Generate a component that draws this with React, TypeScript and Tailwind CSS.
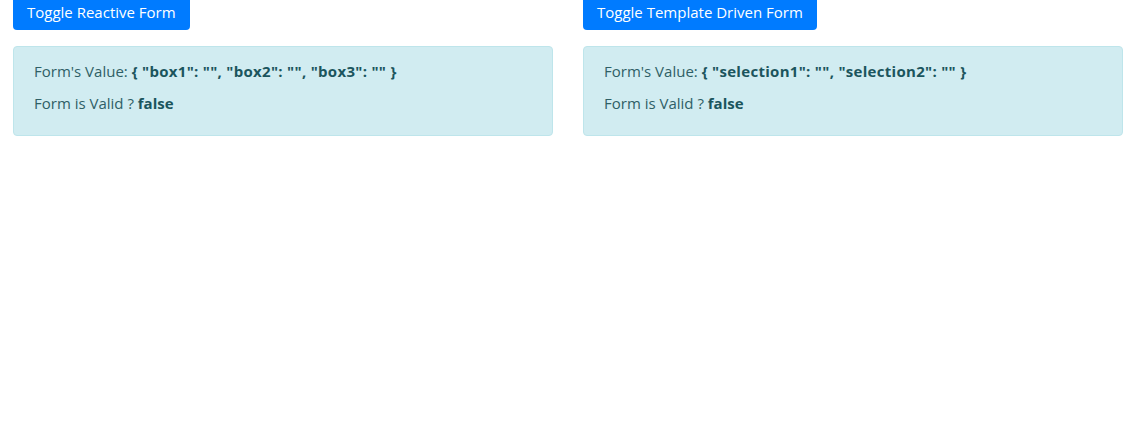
import React from 'react';

interface FormPanelProps {
  label: string;
  value: string;
  valid: boolean;
}

const FormPanel: React.FC<FormPanelProps> = ({ label, value, valid }) => {
  return (
    <div className="flex flex-col">
      <div>
        <button
          type="button"
          className="-mt-[6px] h-[35px] rounded-[4px] bg-[#007bff] px-[14px] text-[15px] leading-[35px] text-white"
        >
          {label}
        </button>
      </div>
      <div className="mt-[16px] flex flex-col gap-[10px] rounded-[4px] border border-[#bee5eb] bg-[#d1ecf1] px-5 pb-[21px] pt-[13px] text-[15px] leading-[22px] text-[#2f5f66]">
        <p>
          Form's Value: <b className="font-bold tracking-[0.3px] text-[#1b555d]">{value}</b>
        </p>
        <p>
          Form is Valid ? <b className="font-bold text-[#1b555d]">{valid ? 'true' : 'false'}</b>
        </p>
      </div>
    </div>
  );
};

export default function App() {
  return (
    <div
      className="h-[440px] overflow-hidden bg-white pl-[13px] pr-[17px]"
      style={{ fontFamily: '"Open Sans", "Noto Sans", sans-serif' }}
    >
      <div className="grid grid-cols-2 gap-[30px]">
        <FormPanel
          label="Toggle Reactive Form"
          value={'{ "box1": "", "box2": "", "box3": "" }'}
          valid={false}
        />
        <FormPanel
          label="Toggle Template Driven Form"
          value={'{ "selection1": "", "selection2": "" }'}
          valid={false}
        />
      </div>
    </div>
  );
}
